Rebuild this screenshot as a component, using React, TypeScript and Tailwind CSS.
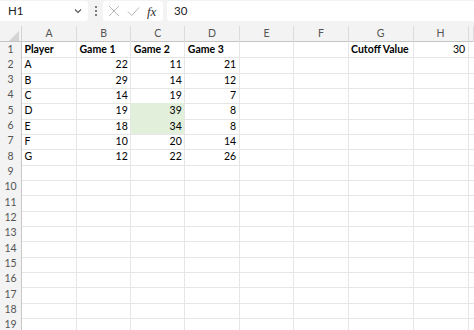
import React from 'react';

const COLS = ['A', 'B', 'C', 'D', 'E', 'F', 'G', 'H', ''];

const DATA: Array<Array<string | number>> = [
  ['Player', 'Game 1', 'Game 2', 'Game 3', '', '', 'Cutoff Value', 30],
  ['A', 22, 11, 21],
  ['B', 29, 14, 12],
  ['C', 14, 19, 7],
  ['D', 19, 39, 8],
  ['E', 18, 34, 8],
  ['F', 10, 20, 14],
  ['G', 12, 22, 26],
];

const GRID = 'grid grid-cols-[22px_55px_54.3px_54px_54.3px_54.7px_54.3px_65px_55px_1fr]';

function Toolbar() {
  return (
    <div className="flex items-center h-[26px] bg-[#f3f3f3] pb-[5px] pt-[1px]">
      <div className="flex items-center h-full w-[88px] bg-white rounded-r-[3px] pl-[8px] pr-[4px] text-[11.5px] text-[#222]">
        <span className="flex-1">H1</span>
        <svg width="10" height="10" viewBox="0 0 10 10" className="mr-[1px]">
          <path d="M2 3.5 L5 6.5 L8 3.5" fill="none" stroke="#555" strokeWidth="1.1" />
        </svg>
      </div>
      <div className="w-[15px] flex flex-col items-center justify-center gap-[2px]">
        <span className="w-[2px] h-[2px] rounded-full bg-[#555]" />
        <span className="w-[2px] h-[2px] rounded-full bg-[#555]" />
        <span className="w-[2px] h-[2px] rounded-full bg-[#555]" />
      </div>
      <div className="flex items-center h-full w-[60px] bg-white rounded-[3px] pl-[5px] gap-[7px]">
        <svg width="12" height="12" viewBox="0 0 12 12">
          <path d="M1 1 L11 11 M11 1 L1 11" stroke="#b8b8b8" strokeWidth="1" fill="none" />
        </svg>
        <svg width="13" height="11" viewBox="0 0 13 11">
          <path d="M1 5.5 L4.8 9.5 L12 1.5" stroke="#b8b8b8" strokeWidth="1" fill="none" />
        </svg>
        <span className="italic text-[13px] text-[#333] font-['Liberation_Serif',serif] leading-none">fx</span>
      </div>
      <div className="flex items-center h-full flex-1 bg-white ml-[4px] rounded-l-[3px] pl-[7px] text-[11.5px] text-[#222]">
        30
      </div>
    </div>
  );
}

export default function App() {
  return (
    <div className="w-[474px] h-[330px] overflow-hidden bg-white font-['Lato','Liberation_Sans',sans-serif]">
      <Toolbar />
      <div className={`${GRID} h-[15.5px] bg-[#f3f3f3] border-b border-[#c4c4c4]`}>
        <div className="relative border-r border-[#d4d4d4]">
          <svg width="10" height="10" viewBox="0 0 10 10" className="absolute right-[2px] bottom-[1px]">
            <path d="M10 0 L10 10 L0 10 Z" fill="#d4d4d4" />
          </svg>
        </div>
        {COLS.map((c, i) => (
          <div
            key={i}
            className="flex items-center justify-center border-r border-[#dcdcdc] text-[10.5px] text-[#555]"
          >
            {c}
          </div>
        ))}
      </div>
      {Array.from({ length: 19 }).map((_, r) => {
        const row = DATA[r] || [];
        return (
          <div key={r} className={`${GRID} h-[15.33px]`}>
            <div className="flex items-center justify-center bg-[#f3f3f3] border-r border-[#c8c8c8] border-b border-b-[#e0e0e0] text-[10.5px] text-[#555]">
              {r + 1}
            </div>
            {COLS.map((_, c) => {
              const v = row[c];
              const isNum = typeof v === 'number';
              const green = c === 2 && (r === 4 || r === 5);
              return (
                <div
                  key={c}
                  className={`flex items-center px-[2.5px] border-r border-b border-[#e6e6e6] text-[10.5px] text-black leading-none whitespace-nowrap ${
                    isNum ? 'justify-end' : 'justify-start'
                  } ${r === 0 && !isNum ? 'font-bold' : ''} ${green ? 'bg-[#e2efda]' : ''}`}
                >
                  {v ?? ''}
                </div>
              );
            })}
          </div>
        );
      })}
    </div>
  );
}
